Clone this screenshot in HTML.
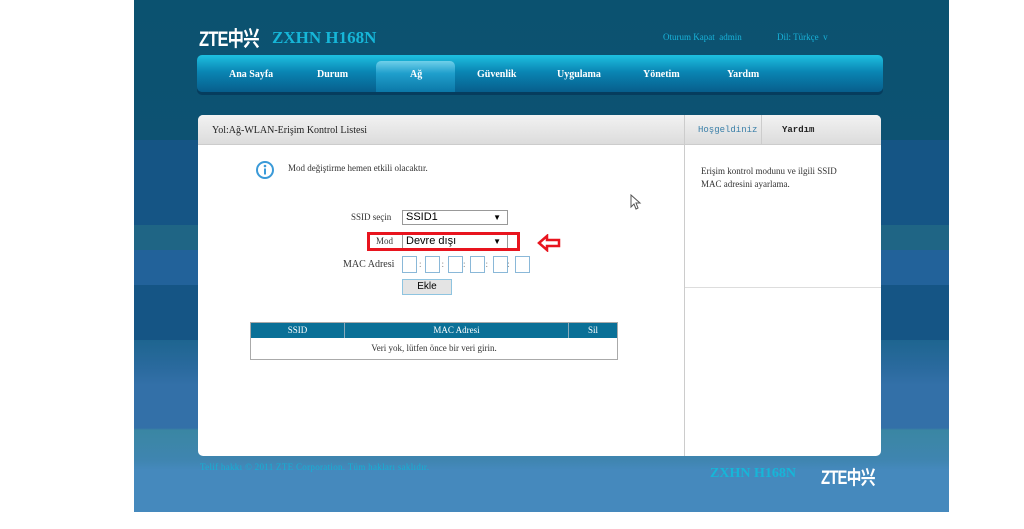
<!DOCTYPE html>
<html><head><meta charset="utf-8"><style>
*{margin:0;padding:0;box-sizing:border-box}
body{width:1024px;height:529px;background:#fff;position:relative;overflow:hidden;font-family:"Liberation Serif",serif}
.col{position:absolute;left:134px;top:0;width:815px;height:512px;background:linear-gradient(#0b5270 0,#0d5272 140px,#155585 140px,#155585 225px,#1f6585 225px,#1f6585 250px,#22629a 250px,#22629a 285px,#155585 285px,#155585 340px,#1e6590 340px,#2a6a9e 368px,#3370a8 385px,#3370a8 428px,#3a86a3 430px,#3f85b0 460px,#4589bd 470px,#4589bd 512px)}
.abs{position:absolute}
.logo{font-family:"Liberation Sans","Noto Sans CJK SC",sans-serif;font-weight:bold;color:#fff;font-size:21px;letter-spacing:-1px;transform:scaleX(.78);transform-origin:left top}
.model{font-family:"Liberation Serif",serif;color:#16b6d8;font-weight:bold;font-size:17px}
.nav{left:197px;top:55px;width:686px;height:37px;border-radius:5px;background:linear-gradient(#1ec0e0,#0a86b4 45%,#075e8c);box-shadow:0 3px 0 #063d5e}
.nav span{position:absolute;top:14px;color:#fff;font-size:10px;font-weight:bold}
.act{left:376px;top:61px;width:79px;height:31px;border-radius:5px 5px 0 0;background:linear-gradient(#6fd0ea,#1f9fcc 40%,#0c78a8)}
.panel{left:198px;top:115px;width:683px;height:341px;background:#fff;border-radius:5px}
.hdr{left:0;top:0;width:683px;height:30px;background:linear-gradient(#f2f2f2,#dcdcdc);border-radius:5px 5px 0 0;border-bottom:1px solid #ccc}
.t{font-size:9px;color:#333}
input.m{position:absolute;width:15px;height:17px;border:1px solid #8ab8d8}
</style></head><body>
<div class="col"></div>
<div class="abs logo" style="left:199px;top:23px">ZTE中兴</div>
<div class="abs model" style="left:272px;top:28px">ZXHN H168N</div>
<div class="abs" style="left:663px;top:32px;color:#19b2d8;font-size:9px">Oturum Kapat &nbsp;admin</div>
<div class="abs" style="left:777px;top:32px;color:#19b2d8;font-size:9px">Dil: Türkçe &nbsp;v</div>
<div class="abs nav">
<span style="left:32px">Ana Sayfa</span><span style="left:120px">Durum</span>
<span style="left:280px">Güvenlik</span><span style="left:360px">Uygulama</span><span style="left:446px">Yönetim</span><span style="left:530px">Yardım</span></div>
<div class="abs act"><span style="position:absolute;left:34px;top:8px;color:#fff;font-size:10px;font-weight:bold">Ağ</span></div>
<div class="abs panel">
<div class="abs hdr"></div>
<div class="abs" style="left:14px;top:10px;font-size:10px;color:#222">Yol:Ağ-WLAN-Erişim Kontrol Listesi</div>
<div class="abs" style="left:486px;top:0;width:1px;height:341px;background:#ccc"></div>
<div class="abs" style="left:563px;top:0;width:1px;height:30px;background:#ccc"></div>
<div class="abs" style="left:500px;top:10px;font-family:'Liberation Mono',monospace;font-size:9px;color:#3a7fa8">Hoşgeldiniz</div>
<div class="abs" style="left:584px;top:10px;font-family:'Liberation Mono',monospace;font-size:9px;color:#222;font-weight:bold">Yardım</div>
<div class="abs" style="left:487px;top:172px;width:196px;height:1px;background:#ddd"></div>
<div class="abs t" style="left:503px;top:50px;line-height:13px">Erişim kontrol modunu ve ilgili SSID<br>MAC adresini ayarlama.</div>
<svg class="abs" style="left:57px;top:45px" width="20" height="20"><circle cx="10" cy="10" r="8" fill="none" stroke="#3a9ad8" stroke-width="2"/><circle cx="10" cy="6" r="1.3" fill="#3a9ad8"/><rect x="9" y="8.5" width="2" height="6" fill="#3a9ad8"/></svg>
<div class="abs t" style="left:90px;top:48px">Mod değiştirme hemen etkili olacaktır.</div>
<div class="abs t" style="left:153px;top:97px">SSID seçin</div>
<div class="abs" style="left:204px;top:95px;width:106px;height:15px;border:1px solid #999;font-family:'Liberation Sans',sans-serif;font-size:11px;padding-left:3px;line-height:13px">SSID1<span style="position:absolute;right:6px;font-size:8px">▼</span></div>
<div class="abs t" style="left:178px;top:121px">Mod</div>
<div class="abs" style="left:204px;top:119px;width:106px;height:15px;border:1px solid #999;font-family:'Liberation Sans',sans-serif;font-size:11px;padding-left:3px;line-height:13px">Devre dışı<span style="position:absolute;right:6px;font-size:8px">▼</span></div>
<div class="abs" style="left:169px;top:117px;width:153px;height:19px;border:3px solid #e8141e"></div>
<svg class="abs" style="left:338px;top:119px" width="26" height="18"><path d="M3 9 L11 2 V6 H23 V12 H11 V16 Z" fill="none" stroke="#e8141e" stroke-width="2.5" stroke-linejoin="miter"/></svg>
<div class="abs t" style="left:145px;top:144px;font-size:10px">MAC Adresi</div>
<input class="m" style="left:204px;top:141px"><input class="m" style="left:227px;top:141px"><input class="m" style="left:250px;top:141px"><input class="m" style="left:272px;top:141px"><input class="m" style="left:295px;top:141px"><input class="m" style="left:317px;top:141px">
<div class="abs t" style="left:221px;top:144px;color:#888;letter-spacing:0">:<span style="margin-left:20px">:</span><span style="margin-left:19px">:</span><span style="margin-left:20px">:</span><span style="margin-left:19px">:</span></div>
<div class="abs" style="left:204px;top:164px;width:50px;height:16px;background:#e4e4e4;border:1px solid #8ec4e0;font-family:'Liberation Sans',sans-serif;font-size:10px;text-align:center;line-height:14px">Ekle</div>
<div class="abs" style="left:52px;top:207px;width:368px;height:38px;border:1px solid #aaa">
<div style="height:15px;background:#0a7097;display:flex;color:#fff;font-size:9px;line-height:15px;text-align:center">
<div style="width:94px;border-right:1px solid #8ab">SSID</div><div style="width:224px;border-right:1px solid #8ab">MAC Adresi</div><div style="flex:1">Sil</div></div>
<div class="t" style="text-align:center;line-height:20px">Veri yok, lütfen önce bir veri girin.</div></div>
</div>
<div class="abs" style="left:200px;top:462px;color:#14b0d4;font-size:9px;letter-spacing:.3px">Telif hakkı © 2011 ZTE Corporation. Tüm hakları saklıdır.</div>
<div class="abs model" style="left:710px;top:466px;font-size:14px">ZXHN H168N</div>
<div class="abs logo" style="left:821px;top:463px;font-size:19px">ZTE中兴</div>
<svg class="abs" style="left:630px;top:194px" width="12" height="16"><path d="M1 1 L1 13 L4 10 L6 15 L8 14 L6 9 L10 9 Z" fill="#fff" stroke="#555" stroke-width="1"/></svg>
</body></html>
